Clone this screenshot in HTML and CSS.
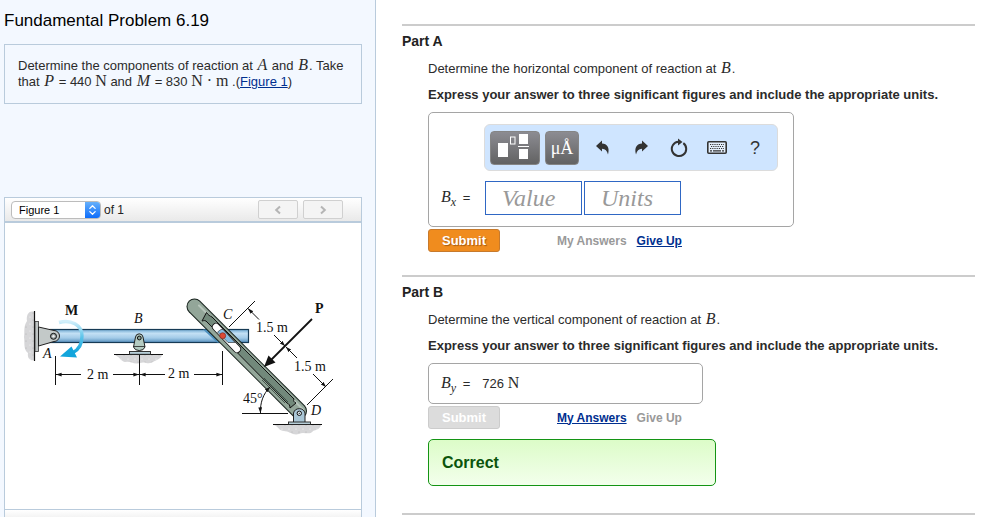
FILE: index.html
```html
<!DOCTYPE html>
<html lang="en">
<head>
    <meta charset="UTF-8">
    <meta name="viewport" content="width=device-width, initial-scale=1.0">
    <title>Fundamental Problem 6.19</title>
    <link rel="stylesheet" href="styles.css">
</head>
<body>

    <!-- Left column: problem text and figure -->
    <aside class="sidebar">
        <h1 class="problem-title">Fundamental Problem 6.19</h1>

        <div class="problem-text">
            Determine the components of reaction at <i class="math">A</i> and <i class="math">B</i>. Take that <i class="math">P</i> = 440 <span class="math">N</span> and <i class="math">M</i> = 830 <span class="math">N · m</span> .(<a href="#figure">Figure 1</a>)
        </div>

        <div class="figure-panel" id="figure">
            <div class="figure-bar">
                <div class="figure-select">
                    <select id="figure-number" aria-label="Figure">
                        <option>Figure 1</option>
                    </select>
                    <svg class="stepper" width="15" height="18" viewBox="0 0 15 18" fill="none" stroke="#fff" stroke-width="1.4" stroke-linecap="round" stroke-linejoin="round">
                        <path d="M4.5 7.2L7.5 4.2L10.5 7.2"></path>
                        <path d="M4.5 10.8L7.5 13.8L10.5 10.8"></path>
                    </svg>
                </div>
                <label for="figure-number">of 1</label>
                <div class="figure-nav">
                    <button class="nav-button" aria-label="Previous figure">
                        <svg width="8" height="10" viewBox="0 0 8 10" fill="none" stroke="#b5b5b5" stroke-width="2"><path d="M6 1.5L2.2 5L6 8.5"></path></svg>
                    </button>
                    <button class="nav-button" aria-label="Next figure">
                        <svg width="8" height="10" viewBox="0 0 8 10" fill="none" stroke="#b5b5b5" stroke-width="2"><path d="M2 1.5L5.8 5L2 8.5"></path></svg>
                    </button>
                </div>
            </div>

            <svg class="figure-drawing" viewBox="5 223 356 286">
                <defs>
                    <linearGradient id="beam" x1="0" y1="0" x2="0" y2="1">
                        <stop offset="0" stop-color="#6fa9d2"></stop>
                        <stop offset="0.3" stop-color="#c3e0f4"></stop>
                        <stop offset="0.65" stop-color="#a3cbe8"></stop>
                        <stop offset="1" stop-color="#558fbd"></stop>
                    </linearGradient>
                    <linearGradient id="turn" x1="0" y1="0" x2="0" y2="1">
                        <stop offset="0" stop-color="#d2effa"></stop>
                        <stop offset="0.5" stop-color="#5cc4ea"></stop>
                        <stop offset="1" stop-color="#12a5dc"></stop>
                    </linearGradient>
                    <pattern id="ground" width="7" height="7" patternUnits="userSpaceOnUse">
                        <rect width="7" height="7" fill="#d6d6d8"></rect>
                        <circle cx="2" cy="2" r="0.5" fill="#fff"></circle>
                        <circle cx="5" cy="5" r="0.5" fill="#aaa"></circle>
                    </pattern>
                    <marker id="tip" viewBox="0 0 8 6" refX="7.5" refY="3" markerWidth="6" markerHeight="5" markerUnits="userSpaceOnUse" orient="auto-start-reverse">
                        <path d="M0 0.5L8 3L0 5.5Z" fill="#111"></path>
                    </marker>
                </defs>

                <!-- wall support at A -->
                <path d="M34 312C29 310 26 315 27 321C23 327 25 332 24 337C25 343 23 349 28 353C27 359 31 361 34 360Z" fill="url(#ground)"></path>
                <path d="M34.5 311V361" stroke="#111" stroke-width="1.2"></path>
                <rect x="35" y="321.5" width="3.5" height="30" fill="#bfc4c4" stroke="#333" stroke-width="0.8"></rect>

                <!-- beam -->
                <rect x="50" y="329.5" width="198.5" height="13" fill="url(#beam)" stroke="#163a55" stroke-width="1.2"></rect>
                <path d="M38.5 327L54 330.5A5.5 5.5 0 0 1 54 341.5L38.5 346Z" fill="#c3c9c8" stroke="#222" stroke-width="1"></path>
                <circle cx="53.5" cy="336.3" r="3" fill="#9ba3a3" stroke="#111"></circle>
                <circle cx="53.5" cy="336.3" r="1.2" fill="#eee"></circle>

                <!-- moment M -->
                <path d="M59 322.500C71 319 82 325 82 336C82 345 78 350 73 352.500" fill="none" stroke="url(#turn)" stroke-width="3.4"></path>
                <path d="M60 356.500L71.500 346.500L77 357.500Z" fill="#12a5dc"></path>

                <!-- rocker at B -->
                <path d="M115 355H162C161 359 156 360 153 362C148 365 145 361 140 363C134 365 130 361 126 362C121 362 121 358 115 355Z" fill="url(#ground)"></path>
                <path d="M114 354.5H163" stroke="#111" stroke-width="1.2"></path>
                <rect x="129.5" y="351.5" width="21" height="2.8" fill="#b7ced8" stroke="#222" stroke-width="0.9"></rect>
                <path d="M135.5 337A3.800 3.800 0 0 1 143 337L145 347A6 5 0 0 1 133.5 347Z" fill="#b4cbc2" stroke="#222"></path>
                <path d="M133.5 346.5H145" stroke="#222" stroke-width="0.8"></path>
                <circle cx="139.3" cy="338" r="1.9" fill="#8ca39b" stroke="#111"></circle>

                <!-- slotted arm C-D -->
                <path d="M203 329.5L217 342.5H224L211 329.5Z" fill="#4f91bf"></path>
                <path d="M194.5 306.5L299 411" stroke="#16211c" stroke-width="16" stroke-linecap="round"></path>
                <path d="M194.5 306.5L299 411" stroke="#93a699" stroke-width="14" stroke-linecap="round"></path>
                <path d="M199 305.500L303 409.500" stroke="#b7c5bb" stroke-width="2" stroke-linecap="round"></path>
                <path d="M202 321L206.5 312.5C208 315 210 316 212 317L294 399C293 401 294 402 296 403L290 408C290 405 289 404 287 403L206 321C204 320 203 321 202 321Z" fill="#72897b" stroke="#111" stroke-width="1"></path>
                <path d="M264 378L288 402M262 380L285 403" stroke="#26352c" stroke-width="0.7" fill="none"></path>
                <path d="M216 327L237 349" stroke="#111" stroke-width="8" stroke-linecap="round"></path>
                <path d="M216 327L237 349" stroke="#fff" stroke-width="6.4" stroke-linecap="round"></path>
                <path d="M217.5 332L221 329.5H223L235 342.5H228Z" fill="#86bce0" stroke="#222" stroke-width="0.6"></path>
                <circle cx="222.7" cy="335.7" r="3" fill="#dc4a35" stroke="#732014" stroke-width="0.6"></circle>

                <!-- pin support at D -->
                <path d="M274 425H321C320 429 316 430 313 431C309 436 304 431 299 434C293 436 289 431 284 431C279 431 279 427 274 425Z" fill="url(#ground)"></path>
                <path d="M273 424.5H322" stroke="#111" stroke-width="1.2"></path>
                <path d="M293.5 423V413A6 6 0 0 1 305 413V423Z" fill="#a9c6d6" stroke="#222"></path>
                <rect x="288.5" y="422" width="22" height="2.5" fill="#b7ced8" stroke="#222" stroke-width="0.9"></rect>
                <circle cx="299.3" cy="413.3" r="2.2" fill="#dce8ee" stroke="#111"></circle>
                <circle cx="299.3" cy="413.3" r="0.6" fill="#111"></circle>

                <!-- dimension lines -->
                <g fill="none" stroke="#111" stroke-width="1">
                    <path d="M55.5 356V385M139.5 355V385M222.5 351V385"></path>
                    <path d="M56 374.5H81" marker-start="url(#tip)"></path>
                    <path d="M113 374.5H139" marker-end="url(#tip)"></path>
                    <path d="M140 374.5H165" marker-start="url(#tip)"></path>
                    <path d="M194 374.5H222" marker-end="url(#tip)"></path>
                    <path d="M229 327L255 301M307 405L333 379"></path>
                    <path d="M248 308.5L259 319.5" marker-start="url(#tip)"></path>
                    <path d="M274 335L285 346" marker-end="url(#tip)"></path>
                    <path d="M286 347L297 358" marker-start="url(#tip)"></path>
                    <path d="M313 374L326 387" marker-end="url(#tip)"></path>
                    <path d="M242 413.5H288"></path>
                    <path d="M270 387C263 394 260 403 260.5 413" marker-start="url(#tip)" marker-end="url(#tip)"></path>
                </g>

                <!-- force P -->
                <path d="M312 319L270 361" stroke="#111" stroke-width="1.8"></path>
                <path d="M264 367L268.5 355.5L275.5 362.5Z" fill="#111"></path>

                <g class="figure-label">
                    <text x="65" y="315" font-weight="bold">M</text>
                    <text x="315" y="313" font-weight="bold">P</text>
                    <text x="134" y="323" font-style="italic">B</text>
                    <text x="43" y="358" font-style="italic">A</text>
                    <text x="223" y="319" font-style="italic">C</text>
                    <text x="311" y="415" font-style="italic">D</text>
                    <text x="87" y="379">2 m</text>
                    <text x="168" y="378">2 m</text>
                    <text x="256" y="332">1.5 m</text>
                    <text x="294" y="371">1.5 m</text>
                    <text x="243" y="403">45°</text>
                </g>
            </svg>

            <div class="figure-footer"></div>
        </div>
    </aside>

    <!-- Right column: answer parts -->
    <main class="parts">
        <section class="part">
            <h2>Part A</h2>
            <div class="part-body">
                <p>Determine the horizontal component of reaction at <i class="math">B</i>.</p>
                <p class="instructions">Express your answer to three significant figures and include the appropriate units.</p>

                <div class="answer-box answer-entry">
                    <div class="toolbar">
                        <button class="template-button template-wide" aria-label="Templates">
                            <svg width="50" height="34" viewBox="0 0 50 34">
                                <rect x="8" y="12" width="10" height="14" fill="#fff"></rect>
                                <rect x="20.5" y="6" width="4.500" height="7" fill="none" stroke="#fff"></rect>
                                <rect x="29" y="3" width="9" height="10" fill="#fff"></rect>
                                <rect x="28" y="15" width="11" height="1" fill="#fff"></rect>
                                <rect x="29" y="18" width="9" height="10" fill="#fff"></rect>
                            </svg>
                        </button>
                        <button class="template-button" aria-label="Symbols">μÅ</button>
                        <div class="tools">
                            <button class="tool" aria-label="Undo">
                                <svg width="16" height="16" viewBox="0 0 16 16" fill="#333"><path d="M1 6L7 0.5V3.5C12 3.5 15 7.5 13 14.5C12 11 10.5 9 7 8.8V11.5Z"></path></svg>
                            </button>
                            <button class="tool" aria-label="Redo">
                                <svg width="16" height="16" viewBox="0 0 16 16" fill="#333"><path d="M15 6L9 0.5V3.5C4 3.5 1 7.5 3 14.5C4 11 5.5 9 9 8.8V11.5Z"></path></svg>
                            </button>
                            <button class="tool" aria-label="Reset">
                                <svg width="18" height="20" viewBox="0 0 18 20"><path d="M13.3 5.1A7.200 7.200 0 1 1 8.500 3.700" fill="none" stroke="#333" stroke-width="2"></path><path d="M8 0.5L12.5 4L8 7.5Z" fill="#333"></path></svg>
                            </button>
                            <button class="tool" aria-label="Keyboard">
                                <svg width="20" height="13" viewBox="0 0 20 13"><rect x="0.8" y="0.8" width="18.4" height="11.4" rx="1" fill="#e4effc" stroke="#333" stroke-width="1.6"></rect><path d="M3 3.5H17M4 5.5H17M3 7.5H17" stroke="#333" stroke-width="1.2" stroke-dasharray="1.2 1"></path><path d="M3 9.8H5M6 9.8H14M15 9.8H17" stroke="#333" stroke-width="1.2"></path></svg>
                            </button>
                            <button class="tool help" aria-label="Help">?</button>
                        </div>
                    </div>
                    <div class="entry-row">
                        <label for="bx-value"><i class="math">B<sub>x</sub></i> =</label>
                        <input type="text" id="bx-value" placeholder="Value">
                        <input type="text" id="bx-units" placeholder="Units" aria-label="Units">
                    </div>
                </div>

                <div class="actions">
                    <button class="submit">Submit</button>
                    <span class="muted">My Answers</span>
                    <a href="#give-up">Give Up</a>
                </div>
            </div>
        </section>

        <section class="part">
            <h2>Part B</h2>
            <div class="part-body">
                <p>Determine the vertical component of reaction at <i class="math">B</i>.</p>
                <p class="instructions">Express your answer to three significant figures and include the appropriate units.</p>

                <div class="answer-box answer-result">
                    <span><i class="math">B<sub>y</sub></i> =</span>
                    <span>726 <span class="math">N</span></span>
                </div>

                <div class="actions">
                    <button class="submit" disabled>Submit</button>
                    <a href="#my-answers">My Answers</a>
                    <span class="muted">Give Up</span>
                </div>

                <div class="feedback">Correct</div>
            </div>
        </section>

        <section class="part"></section>
    </main>

</body>
</html>
```
FILE: styles.css
```css
* {
    margin: 0;
    padding: 0;
    box-sizing: border-box;
}

body {
    display: grid;
    grid-template-columns: 376px 1fr;
    height: 100vh;
    overflow: hidden;
    background-color: #fff;
    color: #2b2b2b;
    font-family: "Liberation Sans", Arial, sans-serif;
    font-size: 13px;
    line-height: 16px;
}

a {
    color: #002f8f;
}

button,
input,
select {
    font: inherit;
}

.math {
    font-family: "Liberation Serif", "Times New Roman", serif;
    font-size: 16px;
    line-height: 14px;
}

i.math {
    margin: 0 1px;
}

.math sub {
    margin-right: 2px;
    font-size: 12px;
    line-height: 1px;
}

/* Sidebar */
.sidebar {
    display: flex;
    flex-direction: column;
    padding: 11px 13px 0 4px;
    border-right: 1px solid #b9cbdc;
    background-color: #f3f8ff;
}

.problem-title {
    color: #000;
    font-size: 17px;
    font-weight: normal;
    line-height: 20px;
}

.problem-text {
    margin-top: 13px;
    padding: 13px;
    border: 1px solid #b9cbdc;
}

.figure-panel {
    display: flex;
    flex: 1;
    flex-direction: column;
    margin-top: 93px;
    border: 1px solid #b9cbdc;
    border-bottom: none;
    background-color: #fff;
}

.figure-bar {
    display: flex;
    align-items: center;
    gap: 3px;
    height: 25px;
    padding: 0 18px 0 6px;
    border-bottom: 2px solid #b9cbdc;
    background: linear-gradient(#fff, #e9e9e9);
    color: #222;
    font-size: 12px;
}

.figure-select {
    display: flex;
    width: 90px;
    height: 18px;
    border: 1px solid #bcbcbc;
    border-radius: 4px;
    background-color: #fff;
    overflow: hidden;
}

.figure-select select {
    appearance: none;
    flex: 1;
    min-width: 0;
    padding-left: 7px;
    border: none;
    background: none;
    color: #000;
    font-size: 11px;
}

.stepper {
    height: 100%;
    background: linear-gradient(#66b0fb, #0d6dfb);
    pointer-events: none;
}

.figure-nav {
    display: flex;
    gap: 5px;
    margin-left: auto;
}

.nav-button {
    display: flex;
    align-items: center;
    justify-content: center;
    width: 40px;
    height: 19px;
    border: 1px solid #d0d0d0;
    border-radius: 2px;
    background-color: #f4f4f4;
}

.figure-drawing {
    display: block;
    width: 100%;
}

.figure-label {
    fill: #111;
    font-family: "Liberation Serif", "Times New Roman", serif;
    font-size: 14px;
}

.figure-footer {
    flex: 1;
    border-top: 1px solid #b9cbdc;
    background: linear-gradient(#fff, #f4f4f4);
}

/* Parts */
.parts {
    padding: 24px 8px 0 26px;
}

.part {
    border-top: 2px solid #ccc;
}

.part h2 {
    padding-top: 6px;
    color: #222;
    font-size: 14px;
    line-height: 18px;
}

.part-body {
    padding: 11px 0 23px 26px;
}

.instructions {
    margin-top: 10px;
    font-weight: bold;
}

.answer-box {
    margin-top: 9px;
    border: 1px solid #a5a5a5;
    border-radius: 5px;
}

.answer-entry {
    max-width: 366px;
    padding: 11px 15px 11px 11px;
}

.toolbar {
    display: flex;
    align-items: center;
    gap: 5px;
    height: 47px;
    margin-left: 44px;
    padding: 0 3px 0 5px;
    border: 1px solid #dcdcdc;
    border-radius: 6px;
    background-color: #cfe5ff;
}

.template-button {
    display: flex;
    align-items: center;
    justify-content: center;
    width: 34px;
    height: 34px;
    border: 1px solid #858585;
    border-radius: 4px;
    background: linear-gradient(#8c8c92, #626262);
    color: #fff;
    font-family: "Liberation Serif", "Times New Roman", serif;
    font-size: 18px;
}

.template-wide {
    width: 50px;
}

.template-button svg {
    flex: none;
}

.tools {
    display: grid;
    flex: 1;
    grid-template-columns: repeat(5, 1fr);
}

.tool {
    display: flex;
    align-items: center;
    justify-content: center;
    height: 34px;
    border: none;
    background: none;
    color: #333;
}

.help {
    font-size: 18px;
}

.entry-row {
    display: flex;
    align-items: center;
    gap: 2px;
    margin-top: 10px;
}

.entry-row label {
    width: 43px;
}

.entry-row input {
    width: 97px;
    height: 34px;
    padding: 0 16px;
    border: 1px solid #2f67c4;
    color: #222;
    font-family: "Liberation Serif", "Times New Roman", serif;
    font-size: 24px;
    font-style: italic;
}

.entry-row input::placeholder {
    color: #999;
}

.actions {
    display: flex;
    align-items: center;
    gap: 10px;
    margin-top: 2px;
    font-size: 12px;
    font-weight: bold;
}

.submit {
    width: 72px;
    height: 23px;
    margin-right: 47px;
    border: 1px solid #c77a2c;
    border-radius: 3px;
    background-color: #f08c1e;
    color: #fff;
    font-size: 13px;
    text-shadow: 1px 1px 1px #a65a10;
}

.submit:disabled {
    border-color: #ccc;
    background-color: #dcdcdc;
    text-shadow: none;
}

.muted {
    color: #999;
}

.answer-result {
    display: flex;
    align-items: center;
    gap: 12px;
    max-width: 275px;
    height: 41px;
    padding-left: 11px;
}

.feedback {
    max-width: 288px;
    margin-top: 10px;
    margin-bottom: 4px;
    padding: 15px 13px 14px;
    border: 1px solid #149414;
    border-radius: 5px;
    background: linear-gradient(#dcfcc8, #f3ffec);
    color: #0b540b;
    font-size: 16px;
    font-weight: bold;
}
```
